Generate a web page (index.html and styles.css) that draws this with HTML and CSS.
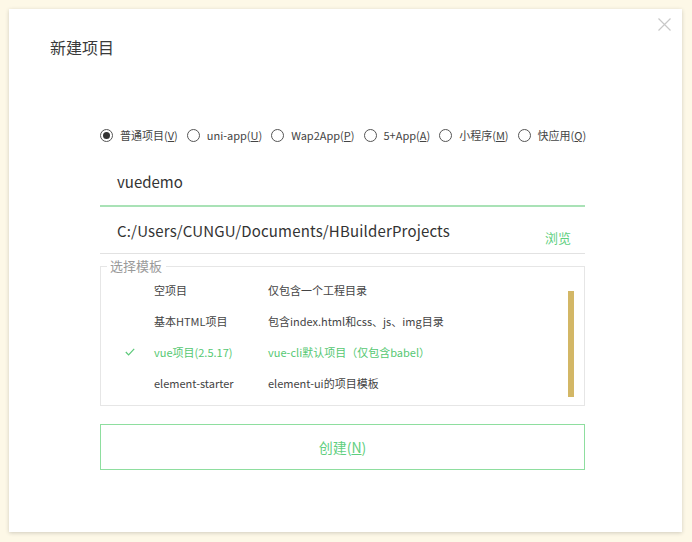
FILE: index.html
```html
<!DOCTYPE html>
<html lang="zh-CN">
<head>
<meta charset="utf-8">
<title>新建项目</title>
<link rel="stylesheet" href="styles.css">
</head>
<body>
<div class="dialog">
  <div class="close" aria-label="关闭">
    <svg width="13" height="13" viewBox="0 0 13 13"><path d="M0.5 0.5L12.5 12.5M12.5 0.5L0.5 12.5" stroke="#c8c8c8" stroke-width="1.2" fill="none"/></svg>
  </div>
  <h1 class="title">新建项目</h1>
  <div class="content">
    <div class="types">
      <label class="type checked"><span class="radio"></span>普通项目(<u>V</u>)</label>
      <label class="type"><span class="radio"></span>uni-app(<u>U</u>)</label>
      <label class="type"><span class="radio"></span>Wap2App(<u>P</u>)</label>
      <label class="type"><span class="radio"></span>5+App(<u>A</u>)</label>
      <label class="type"><span class="radio"></span>小程序(<u>M</u>)</label>
      <label class="type"><span class="radio"></span>快应用(<u>Q</u>)</label>
    </div>
    <div class="field name">vuedemo</div>
    <div class="field path"><span class="path-text">C:/Users/CUNGU/Documents/HBuilderProjects</span><span class="browse">浏览</span></div>
    <fieldset class="templates">
      <legend>选择模板</legend>
      <div class="list">
        <div class="row"><span class="mark"></span><span class="c1">空项目</span><span class="c2">仅包含一个工程目录</span></div>
        <div class="row"><span class="mark"></span><span class="c1">基本HTML项目</span><span class="c2">包含index.html和css、js、img目录</span></div>
        <div class="row active"><span class="mark"><svg width="10" height="8" viewBox="0 0 10 8"><path d="M0.8 4L3.6 6.9L9.2 0.8" stroke="#5cc97a" stroke-width="1.2" fill="none"/></svg></span><span class="c1">vue项目(2.5.17)</span><span class="c2">vue-cli默认项目（仅包含babel）</span></div>
        <div class="row"><span class="mark"></span><span class="c1">element-starter</span><span class="c2">element-ui的项目模板</span></div>
      </div>
      <div class="scrollbar"></div>
    </fieldset>
    <button class="create">创建(<u>N</u>)</button>
  </div>
</div>
</body>
</html>
```

FILE: styles.css
```css
html, body {
  margin: 0;
  padding: 0;
}
body {
  width: 692px;
  height: 542px;
  background: #fdf8e7;
  font-family: "Noto Sans CJK SC", "Noto Sans", sans-serif;
  color: #333;
  padding: 9px;
  box-sizing: border-box;
}
.dialog {
  position: relative;
  width: 673px;
  height: 523px;
  background: #fff;
  box-shadow: 0 1px 4px rgba(0,0,0,0.18);
  box-sizing: border-box;
  padding: 0 97px 0 91px;
}
.close {
  position: absolute;
  top: 9px;
  right: 11px;
  width: 13px;
  height: 13px;
  line-height: 0;
}
.title {
  margin: 0;
  padding: 26px 0 0 0;
  margin-left: -50px;
  font-size: 16px;
  font-weight: normal;
  line-height: 24px;
  color: #3a3a3a;
}
.content {
  padding-top: 66px;
}
.types {
  display: flex;
  align-items: center;
  height: 20px;
  font-size: 11px;
  color: #444;
}
.type {
  display: flex;
  align-items: center;
  margin-right: 9px;
  white-space: nowrap;
}
.type u {
  text-decoration: underline;
}
.radio {
  width: 11px;
  height: 11px;
  border: 1px solid #555;
  border-radius: 50%;
  margin-right: 7px;
  box-sizing: content-box;
  position: relative;
}
.type.checked .radio::after {
  content: "";
  position: absolute;
  left: 2px;
  top: 2px;
  width: 7px;
  height: 7px;
  border-radius: 50%;
  background: #333;
}
.field {
  box-sizing: border-box;
  padding-left: 17px;
  font-size: 15px;
  color: #333;
}
.name {
  margin-top: 25px;
  height: 37px;
  line-height: 24px;
  border-bottom: 2px solid #a9e2b6;
}
.path {
  display: flex;
  justify-content: space-between;
  align-items: flex-start;
  padding-top: 12px;
  height: 47px;
  border-bottom: 1px solid #e2e2e2;
  line-height: 24px;
}
.path-text {
  letter-spacing: 0.17px;
}
.browse {
  font-size: 13px;
  color: #5fd07f;
  margin-top: 7px;
  margin-right: 14px;
}
.templates {
  position: relative;
  margin: 5px 0 0 0;
  padding: 0;
  height: 147px;
  box-sizing: border-box;
  border: 1px solid #e6e6e6;
}
.templates legend {
  margin-left: 6px;
  padding: 0 4px 0 3px;
  font-size: 13px;
  color: #9a9a9a;
  line-height: 14px;
}
.list {
  padding-top: 1px;
}
.row {
  display: flex;
  align-items: center;
  height: 31px;
  font-size: 11px;
  color: #444;
}
.row.active {
  color: #55c872;
}
.mark {
  display: flex;
  align-items: center;
  width: 53px;
  padding-left: 24px;
  box-sizing: border-box;
}
.c1 {
  width: 114px;
}
.scrollbar {
  position: absolute;
  right: 10px;
  top: 18px;
  width: 6px;
  height: 106px;
  background: #d3b766;
}
.create {
  display: block;
  width: 100%;
  margin-top: 18px;
  height: 46px;
  background: #fff;
  border: 1px solid #8ede9f;
  font-family: "Noto Sans CJK SC", "Noto Sans", sans-serif;
  font-size: 14px;
  color: #5fcf7f;
  cursor: pointer;
}
```
